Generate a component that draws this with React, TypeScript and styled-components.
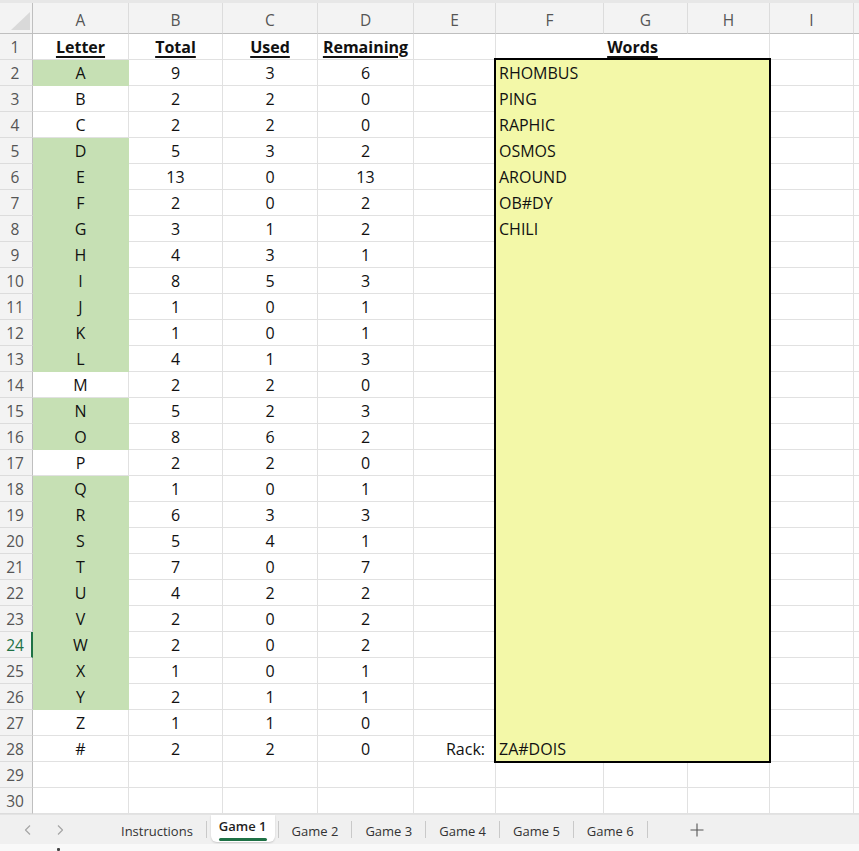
import React from 'react';
import styled, { createGlobalStyle } from 'styled-components';

const GlobalStyle = createGlobalStyle`
  html, body { margin: 0; padding: 0; background: #fff; overflow: hidden; }
  body { font-family: "Open Sans", "Liberation Sans", sans-serif; }
`;

type Row = { l: string; t: number; u: number; r: number };
const DATA: Row[] = [
  ['A', 9, 3], ['B', 2, 2], ['C', 2, 2], ['D', 5, 3], ['E', 13, 0], ['F', 2, 0], ['G', 3, 1],
  ['H', 4, 3], ['I', 8, 5], ['J', 1, 0], ['K', 1, 0], ['L', 4, 1], ['M', 2, 2], ['N', 5, 2],
  ['O', 8, 6], ['P', 2, 2], ['Q', 1, 0], ['R', 6, 3], ['S', 5, 4], ['T', 7, 0], ['U', 4, 2],
  ['V', 2, 0], ['W', 2, 0], ['X', 1, 0], ['Y', 2, 1], ['Z', 1, 1], ['#', 2, 2],
].map(([l, t, u]) => ({ l: l as string, t: t as number, u: u as number, r: (t as number) - (u as number) }));

const WORDS = ['RHOMBUS', 'PING', 'RAPHIC', 'OSMOS', 'AROUND', 'OB#DY', 'CHILI'];
const COL_LETTERS = ['A', 'B', 'C', 'D', 'E', 'F', 'G', 'H', 'I', ''];
const TABS = ['Instructions', 'Game 1', 'Game 2', 'Game 3', 'Game 4', 'Game 5', 'Game 6'];

const Window = styled.div`
  width: 859px;
  height: 851px;
  display: flex;
  flex-direction: column;
  overflow: hidden;
  background: #fff;
`;

const TopBand = styled.div`
  flex: none;
  height: 3px;
  background: #e7e7e7;
`;

const Sheet = styled.div`
  flex: none;
  display: grid;
  grid-template-columns: 33px 96px 94px 95px 96px 82px 108px 84px 82px 84px 1fr;
  grid-template-rows: 31px repeat(30, 26px);
`;

const Corner = styled.div`
  background: #f3f3f3;
  border-right: 1px solid #bfbfbf;
  border-bottom: 1px solid #bfbfbf;
  display: flex;
  align-items: flex-end;
  justify-content: flex-end;
  padding: 0 2px 3px 0;
`;

const ColHeader = styled.div`
  background: #f3f3f3;
  border-right: 1px solid #dcdcdc;
  border-bottom: 1px solid #bfbfbf;
  color: #555;
  font-size: 15.5px;
  display: flex;
  align-items: center;
  justify-content: center;
  padding-top: 3px;
`;

const RowHeader = styled.div<{ $selected?: boolean }>`
  background: #f3f3f3;
  border-right: ${p => (p.$selected ? '2px solid #1e7145' : '1px solid #bfbfbf')};
  border-bottom: 1px solid #dcdcdc;
  color: ${p => (p.$selected ? '#1e7145' : '#555')};
  font-size: 15.5px;
  display: flex;
  align-items: center;
  justify-content: center;
  padding-right: ${p => (p.$selected ? '1px' : '2px')};
`;

const Cell = styled.div<{ $fill?: string; $align?: 'left' | 'center' | 'right'; $head?: boolean; $span?: number }>`
  background: ${p => p.$fill ?? '#fff'};
  border-right: 1px solid ${p => p.$fill ?? '#e1e1e1'};
  border-bottom: 1px solid ${p => p.$fill ?? '#e1e1e1'};
  grid-column: ${p => (p.$span ? `span ${p.$span}` : 'auto')};
  display: flex;
  align-items: center;
  justify-content: ${p => (p.$align === 'left' ? 'flex-start' : p.$align === 'right' ? 'flex-end' : 'center')};
  padding: 0 ${p => (p.$align === 'right' ? '10px' : '3px')} 0 3px;
  font-size: 16px;
  color: #111;
  font-weight: ${p => (p.$head ? 700 : 400)};
  text-decoration: ${p => (p.$head ? 'underline' : 'none')};
  text-underline-offset: 3px;
  text-decoration-thickness: 1.5px;
  white-space: nowrap;
`;

const RackBox = styled.div`
  grid-column: 7 / span 3;
  grid-row: 3 / span 27;
  z-index: 1;
  margin: -2px -1px -1px -2px;
  border: 2px solid #000;
  background: #f3f8a8;
  display: grid;
  grid-template-rows: repeat(27, 1fr);
`;

const WordLine = styled.div`
  display: flex;
  align-items: center;
  padding: 1px 0 0 3px;
  font-size: 16px;
  color: #111;
`;

const TabBar = styled.div`
  flex: none;
  height: 29px;
  border-top: 1px solid #e3e3e3;
  background: #f0f0f0;
  display: flex;
  align-items: stretch;
  padding-left: 12px;
  font-size: 13px;
  color: #333;
`;

const NavButton = styled.div`
  width: 32px;
  display: flex;
  align-items: center;
  justify-content: center;
  color: #a6a6a6;
`;

const TabList = styled.div`
  display: flex;
  align-items: stretch;
  margin-left: 32px;
`;

const Tab = styled.div`
  display: flex;
  align-items: center;
  padding: 2px 13px 0;
  white-space: nowrap;
`;

const ActiveTab = styled.div`
  display: flex;
  flex-direction: column;
  align-items: center;
  justify-content: center;
  gap: 3px;
  margin: 0 3px 2px 4px;
  padding: 0 8px;
  background: #fff;
  border-radius: 0 0 6px 6px;
  box-shadow: 0 1px 2px rgba(0, 0, 0, 0.16);
  color: #1f1f1f;
  font-weight: 600;
  white-space: nowrap;
`;

const Underline = styled.div`
  align-self: stretch;
  height: 3px;
  border-radius: 2px;
  background: #1e7145;
`;

const Separator = styled.div`
  align-self: center;
  width: 1px;
  height: 17px;
  background: #c9c9c9;
`;

const AddButton = styled.div`
  margin-left: 41px;
  width: 16px;
  display: flex;
  align-items: center;
  justify-content: center;
  color: #555;
`;

const StatusStrip = styled.div`
  flex: 1;
  background: #f9f9f9;
  display: flex;
  align-items: flex-end;
  padding-left: 57px;
`;

const StatusMark = styled.div`
  width: 3px;
  height: 3px;
  border-radius: 1px;
  background: #444;
`;

const Chevron = ({ dir }: { dir: 'left' | 'right' }) => (
  <svg width="10" height="12" viewBox="0 0 10 12">
    <path
      d={dir === 'left' ? 'M7 1.5 L2.5 6 L7 10.5' : 'M3 1.5 L7.5 6 L3 10.5'}
      fill="none"
      stroke="currentColor"
      strokeWidth="1.2"
      strokeLinejoin="round"
    />
  </svg>
);

export default function App() {
  const rows: React.ReactNode[] = [];
  for (let r = 1; r <= 30; r++) {
    rows.push(
      <RowHeader key={`rh${r}`} $selected={r === 24}>
        {r}
      </RowHeader>
    );
    if (r === 1) {
      rows.push(
        <Cell key="a1" $head>Letter</Cell>,
        <Cell key="b1" $head>Total</Cell>,
        <Cell key="c1" $head>Used</Cell>,
        <Cell key="d1" $head>Remaining</Cell>,
        <Cell key="e1" />,
        <Cell key="f1" $head $span={3}>Words</Cell>,
        <Cell key="i1" />,
        <Cell key="j1" />
      );
      continue;
    }
    const d = r <= 28 ? DATA[r - 2] : undefined;
    rows.push(
      <Cell key={`a${r}`} $fill={d && d.r > 0 ? '#c6e0b4' : undefined}>{d?.l}</Cell>,
      <Cell key={`b${r}`}>{d?.t}</Cell>,
      <Cell key={`c${r}`}>{d?.u}</Cell>,
      <Cell key={`d${r}`}>{d?.r}</Cell>,
      <Cell key={`e${r}`} $align="right">{r === 28 ? 'Rack:' : ''}</Cell>
    );
    if (r > 28) {
      rows.push(<Cell key={`f${r}`} />, <Cell key={`g${r}`} />, <Cell key={`h${r}`} />);
    } else if (r === 2) {
      rows.push(
        <RackBox key="rack">
          {Array.from({ length: 27 }, (_, i) => (
            <WordLine key={i}>{i < WORDS.length ? WORDS[i] : i === 26 ? 'ZA#DOIS' : ''}</WordLine>
          ))}
        </RackBox>
      );
    }
    rows.push(<Cell key={`i${r}`} />, <Cell key={`j${r}`} />);
  }

  return (
    <Window>
      <GlobalStyle />
      <TopBand />
      <Sheet>
        <Corner>
          <svg width="19" height="18" viewBox="0 0 19 18">
            <polygon points="19,0 19,18 0,18" fill="#d9d9d9" />
          </svg>
        </Corner>
        {COL_LETTERS.map((c, i) => (
          <ColHeader key={`ch${i}`}>{c}</ColHeader>
        ))}
        {rows}
      </Sheet>
      <TabBar>
        <NavButton>
          <Chevron dir="left" />
        </NavButton>
        <NavButton>
          <Chevron dir="right" />
        </NavButton>
        <TabList>
          {TABS.map(t => (
            <React.Fragment key={t}>
              {t === 'Game 1' ? (
                <ActiveTab>
                  <span>{t}</span>
                  <Underline />
                </ActiveTab>
              ) : (
                <Tab>{t}</Tab>
              )}
              <Separator />
            </React.Fragment>
          ))}
        </TabList>
        <AddButton>
          <svg width="14" height="14" viewBox="0 0 14 14">
            <path d="M7 0.5 V13.5 M0.5 7 H13.5" stroke="currentColor" strokeWidth="1.1" />
          </svg>
        </AddButton>
      </TabBar>
      <StatusStrip>
        <StatusMark />
      </StatusStrip>
    </Window>
  );
}
